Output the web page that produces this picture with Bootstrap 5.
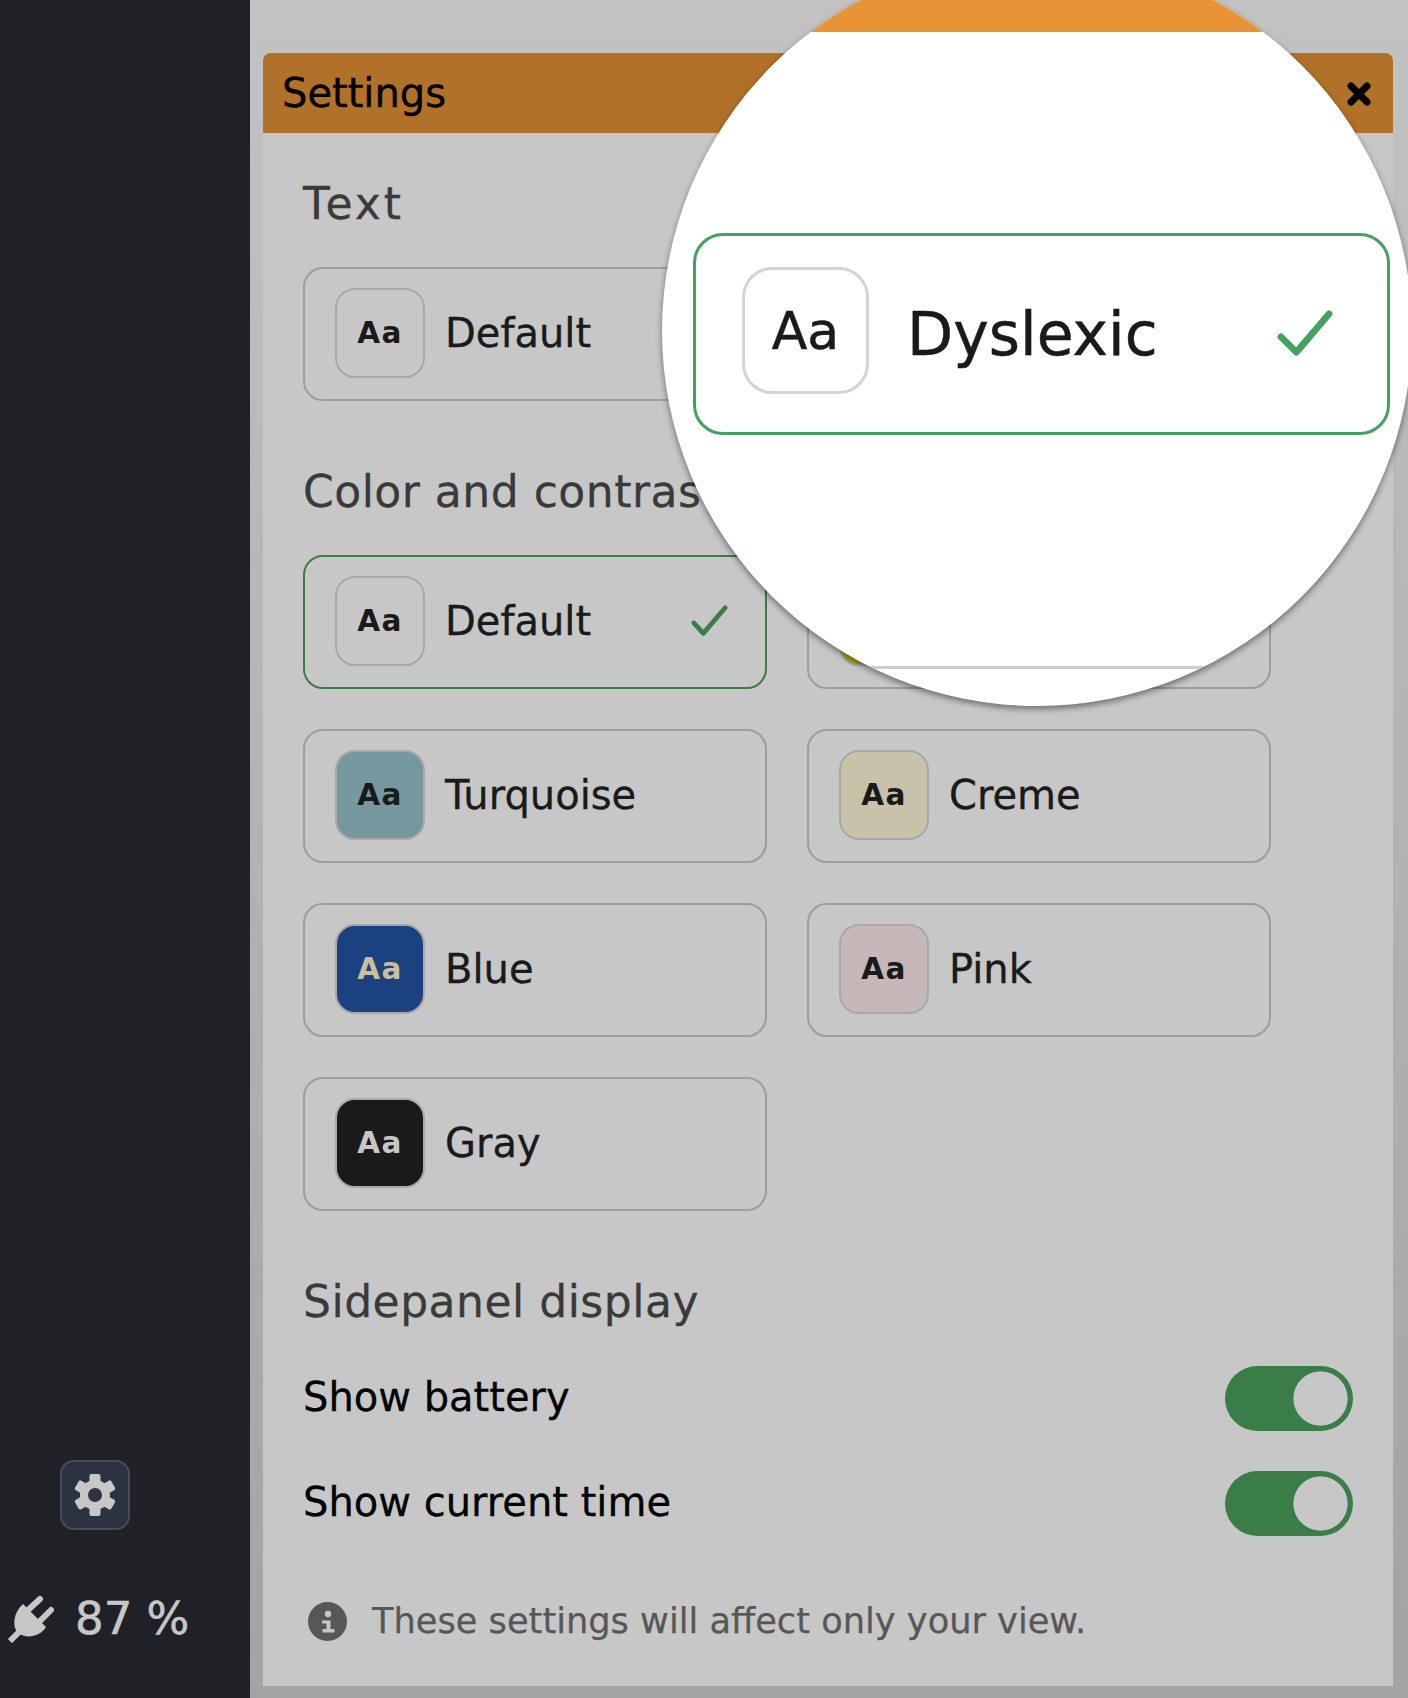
<!DOCTYPE html>
<html lang="en">
<head>
  <meta charset="UTF-8">
  <title>Settings</title>
  <meta name="viewport" content="width=device-width, initial-scale=1">
  <link href="https://cdn.jsdelivr.net/npm/bootstrap@5.3.0/dist/css/bootstrap.min.css" rel="stylesheet">
  <style>
    html, body { height: 100%; }
    body {
      margin: 0; overflow: hidden; position: relative;
      font-family: "DejaVu Sans", sans-serif; color: #1a1a1a;
      background: linear-gradient(#c2c2c2, #a3a3a3);
    }
    .shell { height: 1698px; }
    .side-rail { width: 250px; background: #202126; flex: none; padding-bottom: 56px; }
    .gear-btn {
      width: 70px; height: 70px; margin: 0 0 66px 60px; padding: 0;
      background: #2b3240; border: 2px solid #434b5c; border-radius: 14px;
    }
    .batt { height: 46px; padding-left: 6px; color: #c7c7c7; font-size: 45px; line-height: 46px; -webkit-text-stroke: .6px #c7c7c7; }
    .batt svg { margin-right: 21px; flex: none; }
    .settings-panel {
      width: 1130px; height: 1633px; margin: 53px 0 0 13px; flex: none;
      background: #c7c7c7; border-radius: 8px 8px 0 0;
    }
    .panel-head { height: 80px; background: #b27129; border-radius: 8px 8px 0 0; padding: 0 21px 0 19px; }
    .panel-head h1 { margin: 0; font-size: 40px; line-height: 1; color: #000; font-weight: 400; -webkit-text-stroke: .4px #000; }
    .panel-head svg { margin-top: 2px; }
    .panel-body { padding: 41px 40px 0 40px; }
    .sect-title { height: 60px; line-height: 60px; margin: 0; font-size: 44px; font-weight: 400; color: #3a3a3a; -webkit-text-stroke: .3px #3a3a3a; letter-spacing: .5px; }
    .sect-title.wide-title { letter-spacing: 3px; }
    .opt-grid { display: grid; grid-template-columns: 464px 464px; column-gap: 40px; row-gap: 40px; margin-top: 33px; }
    .opt-item { height: 134px; border: 2px solid #9d9d9d; border-radius: 20px; padding: 0 30px 2px; font-size: 40px; -webkit-text-stroke: .35px #1a1a1a; }
    .opt-item.picked { border-color: #3b7d49; }
    .check-mark { margin-right: 7px; }
    .aa-box {
      width: 90px; height: 90px; flex: none; margin-right: 20px;
      border: 2px solid #a8a8a8; border-radius: 20px;
      font-size: 29.5px; font-weight: 700; letter-spacing: 1.5px; -webkit-text-stroke: 0;
    }
    .sect-gap { margin-top: 61px; }
    .tone-turq { background: #75989f; }
    .tone-yellow { background: #a8a818; }
    .tone-creme { background: #c8c2a8; }
    .tone-blue { background: #1b4180; color: #c7bf9e; }
    .tone-pink { background: #c6b8b8; }
    .tone-gray { background: #1a1a1a; color: #c7c7c7; }
    .toggle-row { height: 65px; font-size: 40px; color: #000; margin-top: 34px; -webkit-text-stroke: .3px #000; }
    .toggle-row > span { padding-bottom: 3px; }
    .toggle-row + .toggle-row { margin-top: 40px; }
    .form-switch.tgl-wrap { padding: 0; margin: 0; min-height: 0; }
    .form-switch .form-check-input.tgl {
      width: 128px; height: 65px; margin: 0; float: none; display: block; border: 0;
      border-radius: 33px; background-color: #3b7d49; background-position: 0 0; background-size: 100% 100%;
      background-image: radial-gradient(circle 27.5px at 95.5px 32.5px, #c7c7c7 97%, transparent 100%);
    }
    .note-row { margin: 59px 0 0 5px; font-size: 35.2px; color: #575757; -webkit-text-stroke: .25px #575757; }
    .note-row svg { margin-right: 25px; flex: none; }
    .lens {
      position: absolute; left: 662px; top: -44px; width: 750px; height: 750px;
      border-radius: 50%; background: #fff; overflow: hidden; box-shadow: 0 3px 6px rgba(0,0,0,.45);
    }
    .lens-band { position: absolute; left: 0; top: 0; width: 100%; height: 76px; background: #e89335; }
    .lens-line { position: absolute; left: 0; top: 710px; width: 100%; height: 3px; background: #ccc; }
    .lens-card {
      position: absolute; left: 31px; top: 277px; width: 697px; height: 202px;
      border: 3px solid #43a260; border-radius: 30px; padding: 0 54px 0 46px; font-size: 60px; -webkit-text-stroke: .5px #1a1a1a;
    }
    .lens-aa {
      width: 127px; height: 127px; flex: none; margin: 0 38px 7px 0;
      border: 3px solid #d4d4d4; border-radius: 30px; font-size: 52px; -webkit-text-stroke: .6px #1a1a1a;
    }
  </style>
</head>
<body>
  <div class="shell d-flex">
    <aside class="side-rail d-flex flex-column justify-content-end">
      <button class="gear-btn d-flex align-items-center justify-content-center" type="button" aria-label="Settings">
        <svg width="42" height="42" viewBox="-21 -21 42 42" fill="#c7c7c7">
          <circle r="15"/>
          <rect x="-5.5" y="-21" width="11" height="11" rx="2"/>
          <rect x="-5.5" y="-21" width="11" height="11" rx="2" transform="rotate(60)"/>
          <rect x="-5.5" y="-21" width="11" height="11" rx="2" transform="rotate(120)"/>
          <rect x="-5.5" y="-21" width="11" height="11" rx="2" transform="rotate(180)"/>
          <rect x="-5.5" y="-21" width="11" height="11" rx="2" transform="rotate(240)"/>
          <rect x="-5.5" y="-21" width="11" height="11" rx="2" transform="rotate(300)"/>
          <circle r="7" fill="#2b3240"/>
        </svg>
      </button>
      <div class="batt d-flex align-items-center">
        <svg width="48" height="48" viewBox="8 194 48 48" fill="#c7c7c7" stroke="#c7c7c7">
          <path d="M25 203 L48 226 C42 236 28 238 20 232 C14 226 15 212 25 203 Z" stroke="none"/>
          <path d="M30 209 L42 198 M41 221 L53 209" stroke-width="6" stroke-linecap="round" fill="none"/>
          <path d="M24 228 L12 240" stroke-width="6" fill="none"/>
        </svg>
        <span>87 %</span>
      </div>
    </aside>

    <main class="settings-panel">
      <div class="panel-head d-flex align-items-center justify-content-between">
        <h1>Settings</h1>
        <svg width="26" height="26" viewBox="0 0 26 26">
          <path d="M5 5 L21 21 M21 5 L5 21" stroke="#000" stroke-width="7" stroke-linecap="round"/>
        </svg>
      </div>
      <div class="panel-body">
        <h2 class="sect-title wide-title">Text</h2>
        <div class="opt-grid">
          <div class="opt-item d-flex align-items-center">
            <span class="aa-box d-flex align-items-center justify-content-center">Aa</span>Default
          </div>
          <div class="opt-item d-flex align-items-center">
            <span class="aa-box d-flex align-items-center justify-content-center">Aa</span>Dyslexic
          </div>
        </div>

        <h2 class="sect-title sect-gap">Color and contrast</h2>
        <div class="opt-grid">
          <div class="opt-item picked d-flex align-items-center justify-content-between">
            <span class="d-flex align-items-center">
              <span class="aa-box d-flex align-items-center justify-content-center">Aa</span>Default
            </span>
            <svg width="38" height="34" viewBox="0 0 40 34" fill="none" class="check-mark">
              <path d="M4 19 L14 30 L37 3" stroke="#3b7d49" stroke-width="5" stroke-linecap="round" stroke-linejoin="round"/>
            </svg>
          </div>
          <div class="opt-item d-flex align-items-center">
            <span class="aa-box tone-yellow d-flex align-items-center justify-content-center">Aa</span>Yellow
          </div>
          <div class="opt-item d-flex align-items-center">
            <span class="aa-box tone-turq d-flex align-items-center justify-content-center">Aa</span>Turquoise
          </div>
          <div class="opt-item d-flex align-items-center">
            <span class="aa-box tone-creme d-flex align-items-center justify-content-center">Aa</span>Creme
          </div>
          <div class="opt-item d-flex align-items-center">
            <span class="aa-box tone-blue d-flex align-items-center justify-content-center">Aa</span>Blue
          </div>
          <div class="opt-item d-flex align-items-center">
            <span class="aa-box tone-pink d-flex align-items-center justify-content-center">Aa</span>Pink
          </div>
          <div class="opt-item d-flex align-items-center">
            <span class="aa-box tone-gray d-flex align-items-center justify-content-center">Aa</span>Gray
          </div>
        </div>

        <h2 class="sect-title sect-gap">Sidepanel display</h2>
        <div class="toggle-row d-flex align-items-center justify-content-between">
          <span>Show battery</span>
          <div class="form-check form-switch tgl-wrap"><input class="form-check-input tgl" type="checkbox" role="switch" checked aria-label="Show battery"></div>
        </div>
        <div class="toggle-row d-flex align-items-center justify-content-between">
          <span>Show current time</span>
          <div class="form-check form-switch tgl-wrap"><input class="form-check-input tgl" type="checkbox" role="switch" checked aria-label="Show current time"></div>
        </div>

        <div class="note-row d-flex align-items-center">
          <svg width="39" height="39" viewBox="0 0 39 39">
            <circle cx="19.5" cy="19.5" r="19.5" fill="#575757"/>
            <circle cx="20" cy="12" r="3.2" fill="#c7c7c7"/>
            <path d="M14 18.5 H22.5 V27 H26.5 V30.5 H14.5 V27 H18.5 V21.5 H14 Z" fill="#c7c7c7"/>
          </svg>
          <span>These settings will affect only your view.</span>
        </div>
      </div>
    </main>
  </div>

  <div class="lens">
    <div class="lens-band"></div>
    <div class="lens-line"></div>
    <div class="lens-card d-flex align-items-center justify-content-between">
      <span class="d-flex align-items-center">
        <span class="lens-aa d-flex align-items-center justify-content-center">Aa</span>Dyslexic
      </span>
      <svg width="56" height="48" viewBox="0 0 58 50" fill="none">
        <path d="M4 28 L20 44 L54 4" stroke="#43a260" stroke-width="7" stroke-linecap="round" stroke-linejoin="round"/>
      </svg>
    </div>
  </div>

  <script src="https://cdn.jsdelivr.net/npm/bootstrap@5.3.0/dist/js/bootstrap.bundle.min.js"></script>
</body>
</html>
